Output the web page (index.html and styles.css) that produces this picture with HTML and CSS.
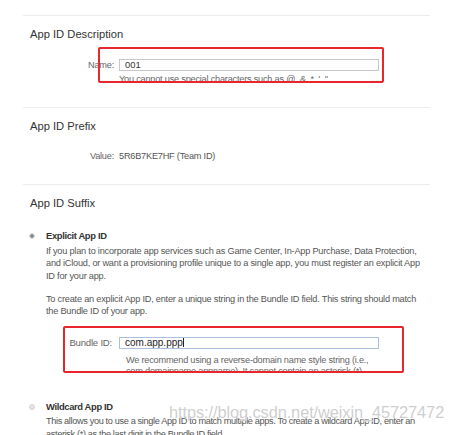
FILE: index.html
```html
<!DOCTYPE html>
<html>
<head>
<meta charset="utf-8">
<link rel="stylesheet" href="styles.css">
</head>
<body>
<div class="page">
  <section class="section s-desc">
    <h2 class="heading">App ID Description</h2>
    <div class="callout callout-name">
      <div class="field field-name">
        <div class="row">
          <span class="label">Name:</span>
          <span class="input">001</span>
        </div>
        <div class="help help-name">You cannot use special characters such as @, &amp;, *, ', "</div>
      </div>
      <div class="mark mark-name"></div>
    </div>
  </section>

  <section class="section s-prefix">
    <h2 class="heading">App ID Prefix</h2>
    <div class="row row-value">
      <span class="label">Value:</span>
      <span class="value">5R6B7KE7HF (Team ID)</span>
    </div>
  </section>

  <section class="section s-suffix">
    <h2 class="heading">App ID Suffix</h2>

    <div class="option">
      <span class="radio checked"></span>
      <div class="option-body">
        <div class="option-title">Explicit App ID</div>
        <p class="para">If you plan to incorporate app services such as Game Center, In-App Purchase, Data Protection, and iCloud, or want a provisioning profile unique to a single app, you must register an explicit App ID for your app.</p>
        <p class="para para-2">To create an explicit App ID, enter a unique string in the Bundle ID field. This string should match the Bundle ID of your app.</p>
        <div class="callout callout-bundle">
          <div class="field field-bundle">
            <div class="row">
              <span class="label label-bundle">Bundle ID:</span>
              <span class="input input-focus">com.app.ppp<span class="caret"></span></span>
            </div>
            <div class="help help-bundle">We recommend using a reverse-domain name style string (i.e., com.domainname.appname). It cannot contain an asterisk (*).</div>
          </div>
          <div class="mark mark-bundle"></div>
        </div>
      </div>
    </div>

    <div class="option option-wild">
      <span class="radio"></span>
      <div class="option-body">
        <div class="option-title">Wildcard App ID</div>
        <p class="para para-wild">This allows you to use a single App ID to match multiple apps. To create a wildcard App ID, enter an asterisk (*) as the last digit in the Bundle ID field.</p>
      </div>
    </div>
  </section>
</div>
<div class="watermark">https://blog.csdn.net/weixin_45727472</div>
</body>
</html>
```

FILE: styles.css
```css
html, body {
  margin: 0;
  padding: 0;
  background: #ffffff;
  overflow: hidden;
}
body {
  width: 452px;
  height: 435px;
  position: relative;
  font-family: "Liberation Sans", Arial, sans-serif;
  color: #444;
  font-size: 9.2px;
  letter-spacing: -0.22px;
  line-height: 12.5px;
}
.page {
  padding-top: 15px;
  margin: 0 22px 0 23px;
}
.section {
  border-top: 1px solid #ededed;
  padding-top: 11px;
}
.heading {
  margin: 0 0 0 7px;
  font-size: 11.2px;
  line-height: 14px;
  font-weight: normal;
  letter-spacing: 0;
  color: #333;
}
.callout {
  position: relative;
}
.callout-name {
  margin-top: 6px;
  margin-bottom: 24px;
  height: 36px;
}
.field {
  overflow: hidden;
}
.field-name {
  height: 36px;
  padding-top: 12px;
  box-sizing: border-box;
}
.row {
  display: flex;
  align-items: center;
}
.label {
  width: 91px;
  text-align: right;
  color: #666;
  margin-right: 5px;
  flex: none;
}
.input {
  width: 260px;
  height: 12px;
  box-sizing: border-box;
  border: 1px solid #c8c8c8;
  padding-left: 5px;
  font-size: 9.4px;
  letter-spacing: 0;
  line-height: 10px;
  color: #333;
  display: flex;
  align-items: center;
}
.help {
  color: #666;
}
.help-name {
  margin-left: 96px;
  line-height: 12px;
  margin-top: 1px;
}
.mark {
  position: absolute;
  top: 0;
  border: 2px solid #e8262b;
  border-radius: 2px;
  box-sizing: border-box;
}
.mark-name {
  left: 75px;
  width: 286px;
  height: 36px;
}
.row-value {
  margin-top: 17px;
  margin-bottom: 22px;
  line-height: 12px;
}
.value {
  color: #555;
}
.option {
  display: flex;
  align-items: flex-start;
  margin-top: 20px;
}
.radio {
  flex: none;
  width: 6px;
  height: 6px;
  border-radius: 50%;
  margin: 3px 11px 0 6px;
  background: #e6e6e6;
  border: 0.5px solid #d4d4d4;
  box-sizing: border-box;
}
.radio.checked {
  background: radial-gradient(circle, #8a8a8a 0 1.6px, #dcdcdc 2px);
}
.option-body {
  flex: 1;
}
.option-title {
  font-weight: bold;
  color: #333;
  font-size: 9.4px;
  letter-spacing: -0.35px;
  line-height: 12.5px;
}
.para {
  margin: 2px 0 0 0;
  color: #555;
  width: 379px;
}
.para-2 {
  margin-top: 10.5px;
}
.para-wild {
  width: 392px;
  letter-spacing: -0.36px;
}
.callout-bundle {
  margin-top: 8px;
  height: 47px;
}
.field-bundle {
  height: 47px;
  padding-top: 11px;
  box-sizing: border-box;
}
.label-bundle {
  width: 66px;
  margin-right: 7px;
  font-size: 9.6px;
}
.input-focus {
  border-color: #a9c1de;
  height: 12px;
  font-size: 10px;
  color: #222;
}
.caret {
  display: inline-block;
  width: 1px;
  height: 9px;
  background: #222;
  margin-left: 0.5px;
}
.help-bundle {
  margin-left: 80px;
  margin-top: 6px;
  line-height: 11px;
  width: 260px;
}
.mark-bundle {
  left: 17px;
  width: 341px;
  height: 47px;
}
.option-wild {
  margin-top: 28px;
}
.watermark {
  position: absolute;
  left: 169px;
  top: 402px;
  font-size: 16.4px;
  line-height: 20px;
  color: rgba(190, 190, 190, 0.75);
  text-shadow: 0 0 1px #fff, 0 0 1px #fff;
  white-space: nowrap;
  letter-spacing: -0.1px;
}
```
